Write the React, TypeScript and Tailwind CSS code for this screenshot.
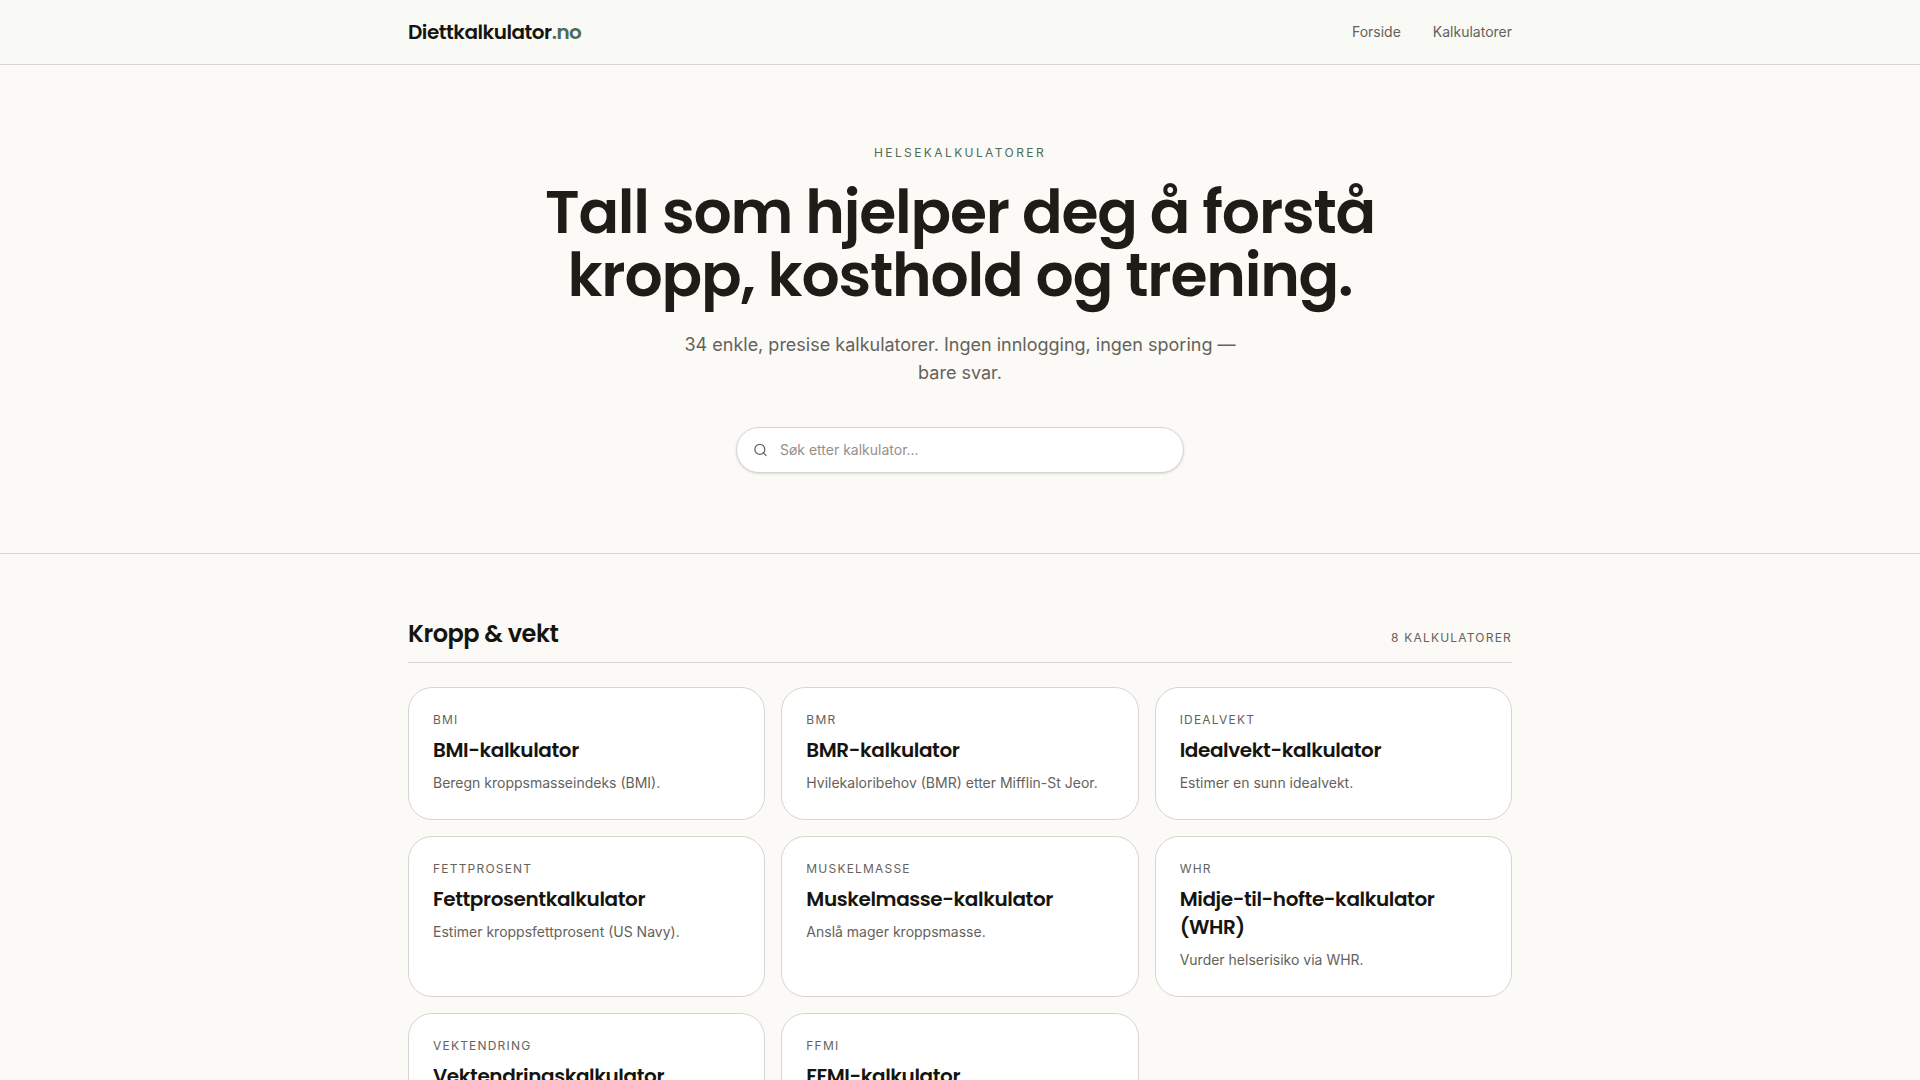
import React, { useState } from "react";
import { Search } from "lucide-react";

type Calculator = {
  tag: string;
  title: string;
  description: string;
};

const calculators: Calculator[] = [
  { tag: "BMI", title: "BMI-kalkulator", description: "Beregn kroppsmasseindeks (BMI)." },
  { tag: "BMR", title: "BMR-kalkulator", description: "Hvilekaloribehov (BMR) etter Mifflin-St Jeor." },
  { tag: "Idealvekt", title: "Idealvekt-kalkulator", description: "Estimer en sunn idealvekt." },
  { tag: "Fettprosent", title: "Fettprosentkalkulator", description: "Estimer kroppsfettprosent (US Navy)." },
  { tag: "Muskelmasse", title: "Muskelmasse-kalkulator", description: "Anslå mager kroppsmasse." },
  { tag: "WHR", title: "Midje-til-hofte-kalkulator (WHR)", description: "Vurder helserisiko via WHR." },
  { tag: "Vektendring", title: "Vektendringskalkulator", description: "Planlegg vektendring over tid." },
  { tag: "FFMI", title: "FFMI-kalkulator", description: "Beregn fettfri masseindeks." },
];

const Header = () => (
  <header className="border-b border-[#d6d5d0] bg-[#f9faf5]">
    <div className="mx-auto flex h-16 max-w-6xl items-center justify-between px-6">
      <a href="/" className="font-[Poppins,Inter,sans-serif] text-xl font-semibold tracking-tight text-[#16140f]">
        Diettkalkulator<span className="text-[#4f6b5b]">.no</span>
      </a>
      <nav className="flex gap-8 text-sm text-[#65625b]">
        <a href="/">Forside</a>
        <a href="#kalkulatorer">Kalkulatorer</a>
      </nav>
    </div>
  </header>
);

const Hero = () => {
  const [query, setQuery] = useState("");

  return (
    <section className="border-b border-[#d6d5d0] px-6 py-20 text-center">
      <p className="text-xs uppercase tracking-[0.2em] text-[#4f6b5b]">Helsekalkulatorer</p>
      <h1 className="mx-auto mt-5 max-w-4xl font-[Poppins,Inter,sans-serif] text-6xl leading-[63px] font-semibold tracking-[-0.02em] text-[#1f1b16]">
        Tall som hjelper deg å forstå kropp, kosthold og trening.
      </h1>
      <p className="mx-auto mt-6 max-w-xl text-lg text-[#65625b]">
        34 enkle, presise kalkulatorer. Ingen innlogging, ingen sporing — bare svar.
      </p>
      {/* Search field */}
      <label className="mx-auto mt-10 flex max-w-md items-center gap-3 rounded-full border border-[#d6d5d0] bg-white px-4 py-3 shadow-sm">
        <Search size={16} className="text-[#65625b]" />
        <input
          type="search"
          aria-label="Søk etter kalkulator"
          placeholder="Søk etter kalkulator..."
          value={query}
          onChange={(e) => setQuery(e.target.value)}
          className="h-5 w-full text-sm outline-none placeholder:text-[#94918c]"
        />
      </label>
    </section>
  );
};

const App = () => (
  <div className="min-h-screen bg-[#fbfaf6] font-[Inter,sans-serif] text-[#16140f]">
    <Header />
    <Hero />
    <main id="kalkulatorer" className="mx-auto max-w-6xl px-6 py-16">
      <div className="flex items-baseline justify-between border-b border-[#d6d5d0] pb-3">
        <h2 className="font-[Poppins,Inter,sans-serif] text-2xl font-semibold tracking-[-0.02em]">Kropp &amp; vekt</h2>
        <span className="text-xs uppercase tracking-widest text-[#65625b]">8 kalkulatorer</span>
      </div>
      <div className="mt-6 grid gap-4 sm:grid-cols-2 lg:grid-cols-3">
        {calculators.map((item) => (
          <a key={item.tag} href="#" className="rounded-3xl border border-[#d6d5d0] bg-white p-6">
            <p className="text-xs uppercase tracking-widest text-[#65625b]">{item.tag}</p>
            <h3 className="mt-2 font-[Poppins,Inter,sans-serif] text-xl font-semibold tracking-[-0.02em]">{item.title}</h3>
            <p className="mt-2 text-sm leading-relaxed text-[#65625b]">{item.description}</p>
          </a>
        ))}
      </div>
    </main>
  </div>
);

export default App;
